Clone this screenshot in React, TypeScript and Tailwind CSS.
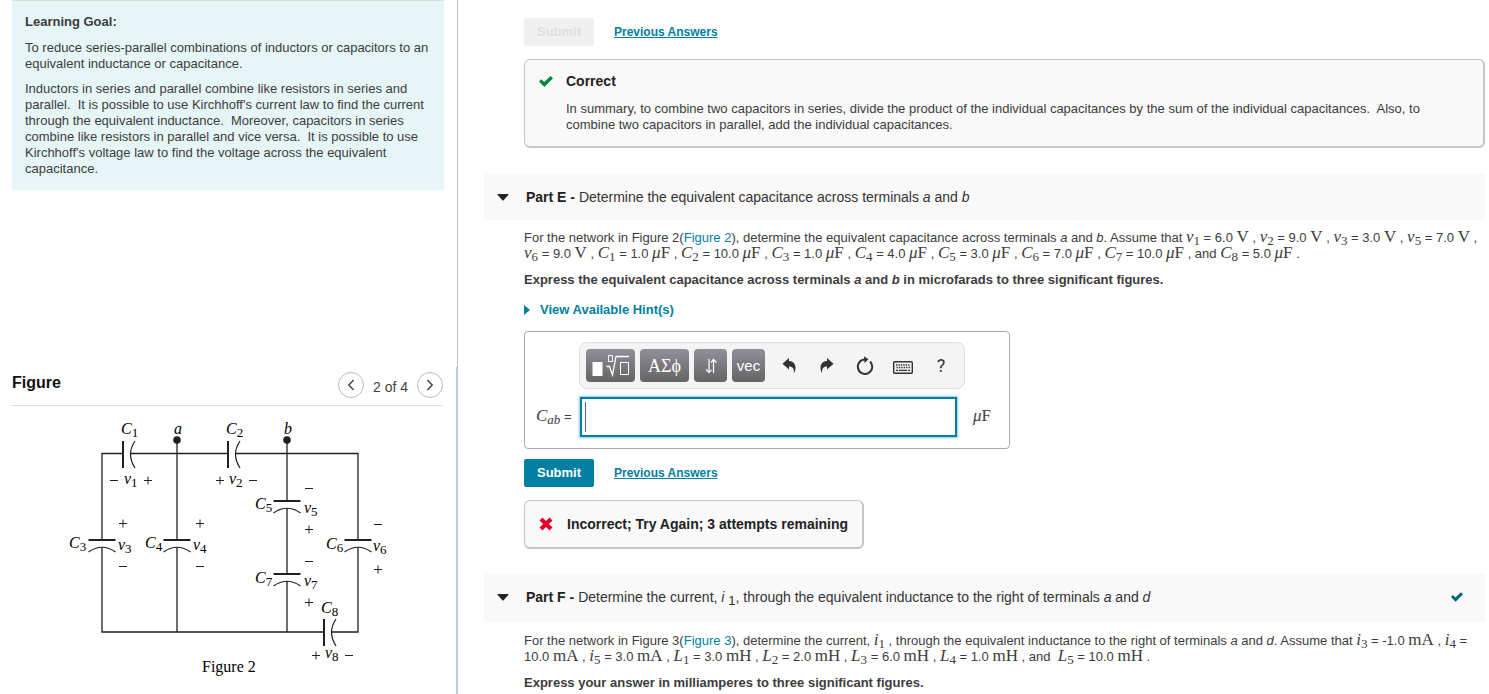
import type { ReactNode } from "react";
import { ChevronLeft, ChevronRight } from "lucide-react";

const Q = ({ s, n }: { s: string; n: string }) => (
  <span className="whitespace-nowrap font-['Liberation_Serif',serif] text-[17px] leading-0">
    <i>{s}</i>
    <span className="relative top-[3px] text-[13px]">{n}</span>
  </span>
);

const Unit = ({ children }: { children: ReactNode }) => (
  <span className="font-['Liberation_Serif',serif] text-[17px] leading-0">{children}</span>
);

const MicroF = () => (
  <Unit>
    <i>μ</i>F
  </Unit>
);

const Value = ({ s, n, value, unit }: { s: string; n: string; value: string; unit: ReactNode }) => (
  <>
    <Q s={s} n={n} /> = {value} {unit}
  </>
);

const V = () => <Unit>V</Unit>;
const MA = () => <Unit>mA</Unit>;
const MH = () => <Unit>mH</Unit>;

function Check({ className }: { className: string }) {
  return (
    <svg viewBox="0 0 14 11" className={className} fill="currentColor" aria-hidden="true">
      <path d="M0 5.6 2.2 3.3 5.2 6.1 11.6 0 14 2.2 5.4 11Z" />
    </svg>
  );
}

function Label({ x, y, s, n }: { x: number; y: number; s: string; n?: string }) {
  return (
    <text x={x} y={y} fontSize={16} fontStyle="italic">
      {s}
      {n && (
        <tspan dy={3} fontSize={13} fontStyle="normal">
          {n}
        </tspan>
      )}
    </text>
  );
}

// plate above, curved plate below
const CapV = ({ x, y }: { x: number; y: number }) => (
  <g>
    <path d={`M${x - 13.5} ${y}h27`} strokeWidth={2} />
    <path d={`M${x - 13.5} ${y + 12}Q${x} ${y + 2.5} ${x + 13.5} ${y + 12}`} strokeWidth={1.2} />
  </g>
);

const CapH = ({ x, y }: { x: number; y: number }) => (
  <g>
    <path d={`M${x} ${y - 13}v27`} strokeWidth={2} />
    <path d={`M${x + 12} ${y - 13}Q${x + 3} ${y} ${x + 12} ${y + 14}`} strokeWidth={1.2} />
  </g>
);

const labels = [
  { x: 121, y: 434, s: "C", n: "1" },
  { x: 174, y: 434, s: "a" },
  { x: 226, y: 434, s: "C", n: "2" },
  { x: 284, y: 434, s: "b" },
  { x: 124, y: 484, s: "v", n: "1" },
  { x: 229, y: 484, s: "v", n: "2" },
  { x: 69, y: 548, s: "C", n: "3" },
  { x: 118, y: 550, s: "v", n: "3" },
  { x: 145, y: 548, s: "C", n: "4" },
  { x: 193, y: 550, s: "v", n: "4" },
  { x: 255, y: 509, s: "C", n: "5" },
  { x: 304, y: 513, s: "v", n: "5" },
  { x: 326, y: 549, s: "C", n: "6" },
  { x: 373, y: 551, s: "v", n: "6" },
  { x: 255, y: 583, s: "C", n: "7" },
  { x: 304, y: 586, s: "v", n: "7" },
  { x: 321, y: 613, s: "C", n: "8" },
  { x: 325, y: 658, s: "v", n: "8" },
];

const plus = [[148, 480.5], [220, 480.5], [123, 523.5], [200, 523.5], [309, 529.5], [309, 602.5], [378, 569.5], [316, 655.5]];
const minus = [[114, 480.5], [253, 480.5], [123, 566.5], [200, 566.5], [309, 488.5], [309, 561.5], [378, 524.5], [349, 655.5]];

function Circuit() {
  return (
    <svg
      viewBox="12 406 431 288"
      width={431}
      height={288}
      className="block shrink-0 font-['Liberation_Serif',serif]"
      role="img"
      aria-label="Figure 2"
    >
      <g fill="none" stroke="#231f20" strokeWidth={1.3}>
        <path d="M123 453.5H102V540M102 547V632H324M332 632H358V547M358 540V453.5H236M228 453.5H131" />
        <path d="M177 440V540M177 547V632M287 440V501M287 508V574M287 581V632" />
        <CapH x={123} y={454} />
        <CapH x={228} y={454} />
        <CapH x={324} y={632} />
        <CapV x={102} y={540} />
        <CapV x={177} y={540} />
        <CapV x={358} y={540} />
        <CapV x={287} y={501} />
        <CapV x={287} y={574} />
      </g>
      <circle cx={177} cy={440} r={3.8} fill="#231f20" />
      <circle cx={287} cy={440} r={3.8} fill="#231f20" />
      <g stroke="#222" strokeWidth={1}>
        {plus.map(([x, y]) => (
          <path key={`${x}-${y}`} d={`M${x - 4} ${y}h8M${x} ${y - 4}v8`} />
        ))}
        {minus.map(([x, y]) => (
          <path key={`${x}-${y}`} d={`M${x - 4} ${y}h8`} />
        ))}
      </g>
      {labels.map((l) => (
        <Label key={l.s + (l.n ?? "")} {...l} />
      ))}
      <text x={202} y={672} fontSize={16}>
        Figure 2
      </text>
    </svg>
  );
}

function Sidebar() {
  return (
    <aside className="flex w-[458px] shrink-0 flex-col">
      <div className="min-h-[367px] border-r border-[#bcc5d6] pl-3 pr-[13px]">
        <section className="border-t border-[#dcdcdc] bg-[#e6f6f6] px-[13px] py-[13px] text-[#3c3c3c]">
          <h2 className="mb-[10px] font-bold">Learning Goal:</h2>
          <p className="mb-[9px]">
            To reduce series-parallel combinations of inductors or capacitors to an equivalent inductance or capacitance.
          </p>
          <p>
            Inductors in series and parallel combine like resistors in series and parallel.&nbsp; It is possible to use
            Kirchhoff's current law to find the current through the equivalent inductance.&nbsp; Moreover, capacitors in
            series combine like resistors in parallel and vice versa.&nbsp; It is possible to use Kirchhoff's voltage law
            to find the voltage across the equivalent capacitance.
          </p>
        </section>
      </div>
      <section className="grow border-r-2 border-[#b9cce2] pl-3 pr-[13px]">
        <div className="flex h-[39px] items-start justify-between border-b border-[#dcdcdc]">
          <h2 className="pt-1 text-base font-bold leading-6 text-[#111]">Figure</h2>
          <div className="flex items-center gap-[9px] pt-[5px] text-[#444]">
            <button aria-label="Previous figure" className="flex size-[26px] items-center justify-center rounded-full border border-[#bbb]">
              <ChevronLeft size={18} strokeWidth={2} />
            </button>
            <span className="pt-1 text-[14px]">2 of 4</span>
            <button aria-label="Next figure" className="flex size-[26px] items-center justify-center rounded-full border border-[#bbb]">
              <ChevronRight size={18} strokeWidth={2} />
            </button>
          </div>
        </div>
        <Circuit />
      </section>
    </aside>
  );
}

function PartHeader({ children, done }: { children: ReactNode; done?: boolean }) {
  return (
    <header
      className={`flex items-center bg-[#f9f9f9] pl-[13px] pr-[22px] text-[14px] text-[#333] ${done ? "pb-[15px] pt-[13px]" : "py-[13px]"}`}
    >
      <button aria-label="Toggle part" className="mr-[17px]">
        <svg viewBox="0 0 12 7" className="h-[7px] w-3 fill-[#222]" aria-hidden="true">
          <path d="M1 0h10q1 0 .5.8L6.6 6.2q-.6.6-1.2 0L.5.8Q0 0 1 0Z" />
        </svg>
      </button>
      <h2 className="grow leading-5">{children}</h2>
      {done && <Check className="h-[10px] w-3 text-[#00637c]" />}
    </header>
  );
}

const key =
  "flex h-[33px] shrink-0 items-center justify-center rounded bg-linear-to-b from-[#928f9a] to-[#646464] text-white";
const tool = "flex w-[38px] shrink-0 items-center justify-center";

function AnswerBox() {
  return (
    <div className="flex h-[118px] w-[486px] flex-col gap-2 rounded border border-[#aaa] pl-[11px] pt-[10px]">
      <div className="ml-[43px] flex h-[47px] w-[386px] items-center gap-[5px] rounded-lg border border-[#ddd] bg-[#f4f4f4] pl-[6px] text-[#333]">
        <button className={`${key} w-[49px]`} aria-label="Templates">
          <svg viewBox="0 0 38 23" className="h-[23px] w-[38px]" fill="none" stroke="#fff" aria-hidden="true">
            <path d="M.5 8h10v14H.5Z" fill="#fff" stroke="none" />
            <path d="M16.500 1.500h4v6h-4Z" />
            <path d="M14.500 12.500h3l3 8.500 3.500-18.500h13" strokeWidth={1.300} />
            <path d="M28.500 8.500h8v12h-8Z" />
          </svg>
        </button>
        <button className={`${key} w-[49px] font-['Liberation_Serif',serif] text-[18px]`}>ΑΣϕ</button>
        <button className={`${key} w-[33px]`} aria-label="Arrows">
          <svg viewBox="0 0 14 16" className="h-4 w-[14px]" fill="none" stroke="#fff" strokeWidth={1.200} aria-hidden="true">
            <path d="M5 1v13.500M2 11.500l3 3L7.500 12M9.500 15V1.500M7 4.500l2.500-3 3 3" />
          </svg>
        </button>
        <button className={`${key} w-[33px] text-[15px]`}>vec</button>
        <div className="flex items-center">
          <button aria-label="Undo" className={tool}>
            <svg viewBox="0 0 40 46" className="h-[15px] w-[14px] fill-[#333]" aria-hidden="true">
              <path d="M0 18 20 0V9C33 9 40 18 40 30C40 37 38 42 35 46C36 33 32 26 20 26V35Z" />
            </svg>
          </button>
          <button aria-label="Redo" className={tool}>
            <svg viewBox="0 0 40 46" className="h-[15px] w-[14px] fill-[#333]" aria-hidden="true">
              <path d="M40 18 20 0V9C7 9 0 18 0 30C0 37 2 42 5 46C4 33 8 26 20 26V35Z" />
            </svg>
          </button>
          <button aria-label="Reset" className={tool}>
            <svg viewBox="0 0 18 19" className="h-[19px] w-[18px]" aria-hidden="true">
              <path d="M9 3.500A7.200 7.200 0 1 0 14 5.500" fill="none" stroke="#333" strokeWidth={2} />
              <path d="M8 .3 12.500 3.200 8.500 7Z" fill="#333" />
            </svg>
          </button>
          <button aria-label="Keyboard shortcuts" className={`${tool} pt-1`}>
            <svg viewBox="0 0 20 13" className="h-[13px] w-5" fill="none" stroke="#333" aria-hidden="true">
              <rect x=".7" y=".7" width="18.600" height="11.600" rx="1" strokeWidth={1.400} />
              <path d="M3 4h14M3.500 6.500H17" strokeWidth={1.300} strokeDasharray="1.400 1" />
              <path d="M3 9.300h2M6 9.300h8M15 9.300h2" strokeWidth={1.300} />
            </svg>
          </button>
          <button className={`${tool} font-[Roboto,sans-serif] text-[18px]`}>?</button>
        </div>
      </div>
      <div className="flex h-10 items-center">
        <label htmlFor="cab" className="w-[44px] whitespace-nowrap">
          <span className="font-['Liberation_Serif',serif] text-[17px] italic leading-0">
            C<span className="relative top-[3px] text-[13px]">ab</span>
          </span>{" "}
          =
        </label>
        <div className="flex h-10 w-[377px] items-center border-2 border-[#007fa3] px-[3px] shadow-[0_0_2px_1px_#8cc8d8]">
          <span className="h-[30px] w-px shrink-0 bg-[#3567c0]" />
          <input id="cab" className="w-full outline-none" />
        </div>
        <span className="ml-4">
          <MicroF />
        </span>
      </div>
    </div>
  );
}

const PreviousAnswers = () => (
  <a href="#answers" className="text-[12px] font-bold text-[#007fa3] underline">
    Previous Answers
  </a>
);

export default function App() {
  return (
    <div className="flex min-h-screen bg-white font-['Liberation_Sans',Arial,sans-serif] text-[13px] leading-4 text-[#3c3c3c]">
      <Sidebar />
      <main className="min-w-0 grow pl-[26px] pr-1 pt-[18px]">
        <div className="pl-10">
          <div className="flex items-center gap-5">
            <button disabled className="h-7 w-[70px] rounded-xs bg-[#f0f0f0] font-bold text-[#dedede]">
              Submit
            </button>
            <PreviousAnswers />
          </div>
          <section className="mt-[13px] flex gap-[13px] rounded-md border border-b-2 border-r-2 border-[#c5c5c5] bg-[#f9f9f9] px-[14px] pb-[13px] pt-3">
            <Check className="mt-1 h-[11px] w-[14px] shrink-0 text-[#008638]" />
            <div>
              <h3 className="mb-[10px] text-[14px] font-bold leading-[19px] text-[#222]">Correct</h3>
              <p>
                In summary, to combine two capacitors in series, divide the product of the individual capacitances by the
                sum of the individual capacitances.&nbsp; Also, to combine two capacitors in parallel, add the individual
                capacitances.
              </p>
            </div>
          </section>
        </div>

        <section className="mt-[26px]">
          <PartHeader>
            <b className="text-[#222]">Part E - </b>Determine the equivalent capacitance across terminals <i>a</i> and <i>b</i>
          </PartHeader>
          <div className="pl-10 pt-[10px]">
            <p>
              For the network in Figure 2(
              <a href="#figure2" className="text-[#007fa3]">
                Figure 2
              </a>
              ), determine the equivalent capacitance across terminals <i>a</i> and <i>b</i>. Assume that{" "}
              <Value s="v" n="1" value="6.0" unit={<V />} /> , <Value s="v" n="2" value="9.0" unit={<V />} /> ,{" "}
              <Value s="v" n="3" value="3.0" unit={<V />} /> , <Value s="v" n="5" value="7.0" unit={<V />} /> ,{" "}
              <span className="whitespace-nowrap">
                <Value s="v" n="6" value="9.0" unit={<V />} />
              </span>{" "}
              , <Value s="C" n="1" value="1.0" unit={<MicroF />} /> , <Value s="C" n="2" value="10.0" unit={<MicroF />} /> ,{" "}
              <Value s="C" n="3" value="1.0" unit={<MicroF />} /> , <Value s="C" n="4" value="4.0" unit={<MicroF />} /> ,{" "}
              <Value s="C" n="5" value="3.0" unit={<MicroF />} /> , <Value s="C" n="6" value="7.0" unit={<MicroF />} /> ,{" "}
              <Value s="C" n="7" value="10.0" unit={<MicroF />} /> , and <Value s="C" n="8" value="5.0" unit={<MicroF />} /> .
            </p>
            <p className="mt-[10px] font-bold">
              Express the equivalent capacitance across terminals <i>a</i> and <i>b</i> in microfarads to three significant
              figures.
            </p>
            <button className="mb-[13px] mt-[14px] flex items-center gap-[10px] font-bold text-[#007fa3]">
              <svg viewBox="0 0 6 10" className="h-[10px] w-[6px] fill-current" aria-hidden="true">
                <path d="M0 0 6 5 0 10Z" />
              </svg>
              View Available Hint(s)
            </button>
            <AnswerBox />
            <div className="mt-[10px] flex items-center gap-5">
              <button className="h-7 w-[70px] rounded-xs bg-[#007fa3] font-bold text-white">Submit</button>
              <PreviousAnswers />
            </div>
            <div className="mt-[13px] flex h-[49px] w-fit items-center gap-[14px] rounded-md border border-b-2 border-r-2 border-[#c5c5c5] bg-[#f9f9f9] px-[14px]">
              <svg viewBox="0 0 14 14" className="size-[14px]" stroke="#e0002b" strokeWidth={4.2} aria-hidden="true">
                <path d="m2 2 10 10M12 2 2 12" />
              </svg>
              <p className="text-[14px] font-bold text-[#222]">Incorrect; Try Again; 3 attempts remaining</p>
            </div>
          </div>
        </section>

        <section className="mt-[25px]">
          <PartHeader done>
            <b className="text-[#222]">Part F - </b>Determine the current, <i>i</i>{" "}
            <sub className="text-[13px]">1</sub>, through the equivalent inductance to the right of terminals <i>a</i> and{" "}
            <i>d</i>
          </PartHeader>
          <div className="pl-10 pt-[11px]">
            <p>
              For the network in Figure 3(
              <a href="#figure3" className="text-[#007fa3]">
                Figure 3
              </a>
              ), determine the current, <Q s="i" n="1" /> , through the equivalent inductance to the right of terminals{" "}
              <i>a</i> and <i>d</i>. Assume that <Value s="i" n="3" value="-1.0" unit={<MA />} /> ,{" "}
              <Value s="i" n="4" value="10.0" unit={<MA />} /> , <Value s="i" n="5" value="3.0" unit={<MA />} /> ,{" "}
              <Value s="L" n="1" value="3.0" unit={<MH />} /> , <Value s="L" n="2" value="2.0" unit={<MH />} /> ,{" "}
              <Value s="L" n="3" value="6.0" unit={<MH />} /> , <Value s="L" n="4" value="1.0" unit={<MH />} /> , and{" "}
              &nbsp;<Value s="L" n="5" value="10.0" unit={<MH />} /> .
            </p>
            <p className="mt-[10px] font-bold">Express your answer in milliamperes to three significant figures.</p>
          </div>
        </section>
      </main>
    </div>
  );
}
